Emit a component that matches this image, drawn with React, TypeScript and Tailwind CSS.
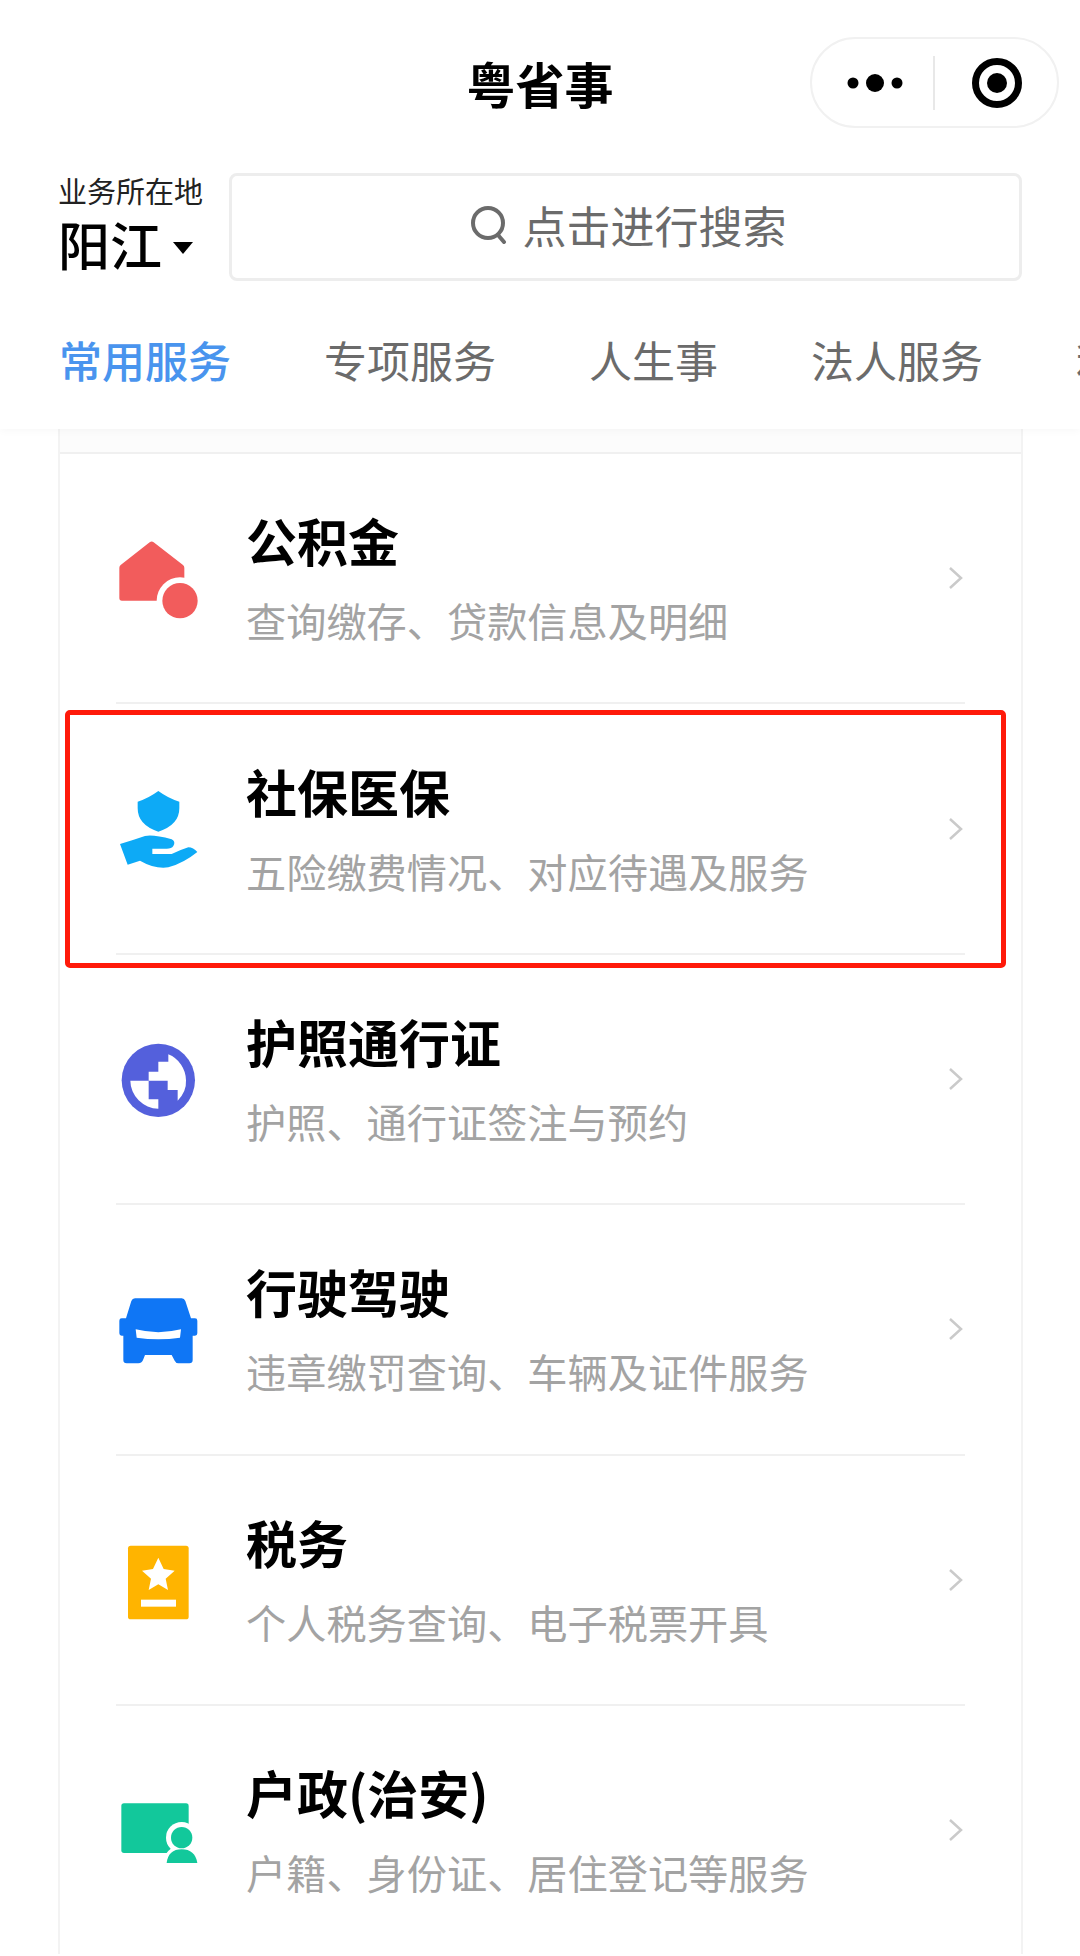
const FONT = '[font-family:"Noto_Sans_CJK_SC","Noto_Sans",sans-serif]';

function HouseIcon() {
  return (
    <svg className="w-[130px] h-[118px] shrink-0" viewBox="0 27 390 354">
      <path d="M179 97 Q185 92 191 97 L279 165 Q283 168 283 173 V272 H96 Q88 272 88 264 V173 Q88 168 92 165 Z" fill="#f25c5c" />
      <circle cx="270" cy="272" r="70" fill="#fff" />
      <circle cx="270" cy="272" r="53" fill="#f25c5c" />
    </svg>
  );
}

function ShieldIcon() {
  return (
    <svg className="w-[130px] h-[118px] shrink-0" viewBox="0 0 390 354" fill="#0daaf6">
      <path d="M205 63 Q235 85 268 95 V115 Q268 165 205 185 Q143 165 143 115 V95 Q175 85 205 63 Z" />
      <path d="M90 222 Q130 210 165 198 Q190 193 245 208 Q258 215 250 228 Q245 236 230 236 H187 V252 H245 Q270 240 295 232 Q310 232 322 246 Q280 280 235 292 Q195 298 150 272 L113 284 Z" />
    </svg>
  );
}

function GlobeIcon() {
  return (
    <svg className="w-[130px] h-[118px] shrink-0" viewBox="0 0 390 354">
      <circle cx="205" cy="181" r="110" fill="#5460dc" />
      <path d="M235 103 V125 H205 V155 H176 V182 H233 V210 H263 V242 Q290 215 288 181 A85 85 0 0 0 235 103 Z" fill="#fff" />
      <path d="M121 182 H176 V238 H205 V266 A85 85 0 0 1 121 182 Z" fill="#fff" />
    </svg>
  );
}

function CarIcon() {
  return (
    <svg className="w-[130px] h-[118px] shrink-0" viewBox="0 0 390 354">
      <path d="M135 85 H275 Q283 85 286 93 L303 145 H315 Q322 145 322 152 V190 Q322 197 315 197 H308 V270 Q308 280 298 280 H265 Q258 280 254 272 L245 255 H165 L160 268 Q156 280 145 280 H110 Q100 280 100 270 V197 H95 Q88 197 88 190 V152 Q88 145 95 145 H108 L124 93 Q127 85 135 85 Z" fill="#0f76f5" />
      <path d="M137 178 Q205 195 273 178 L270 203 Q205 213 140 203 Z" fill="#fff" />
    </svg>
  );
}

function TaxIcon() {
  return (
    <svg className="w-[130px] h-[118px] shrink-0" viewBox="0 0 390 354">
      <rect x="114" y="74" width="182" height="221" rx="8" fill="#ffb400" />
      <path d="M205 110 L221 144 L254 149 L227 173 L234 207 L205 190 L176 207 L183 173 L156 149 L189 144 Z" fill="#fff" />
      <rect x="153" y="236" width="105" height="21" fill="#fff" />
    </svg>
  );
}

function IdIcon() {
  return (
    <svg className="w-[130px] h-[118px] shrink-0" viewBox="0 0 390 354">
      <rect x="94" y="97" width="202" height="149" rx="8" fill="#12c89b" />
      <circle cx="275" cy="200" r="47" fill="#fff" />
      <path d="M214 290 Q222 225 275 225 V290 Z" fill="#fff" />
      <path d="M230 276 Q235 235 275 235 Q315 235 322 276 Z" fill="#12c89b" />
      <circle cx="275" cy="200" r="32" fill="#12c89b" />
    </svg>
  );
}

const rows = [
  { icon: <HouseIcon />, title: '公积金', desc: '查询缴存、贷款信息及明细' },
  { icon: <ShieldIcon />, title: '社保医保', desc: '五险缴费情况、对应待遇及服务' },
  { icon: <GlobeIcon />, title: '护照通行证', desc: '护照、通行证签注与预约' },
  { icon: <CarIcon />, title: '行驶驾驶', desc: '违章缴罚查询、车辆及证件服务' },
  { icon: <TaxIcon />, title: '税务', desc: '个人税务查询、电子税票开具' },
  { icon: <IdIcon />, title: '户政(治安)', desc: '户籍、身份证、居住登记等服务' },
];

const tabs = ['专项服务', '人生事', '法人服务', '利民服务'];

export default function App() {
  return (
    <div className={`relative w-[1080px] h-[1956px] overflow-hidden bg-white ${FONT}`}>
      <header className="relative z-10 h-[429px] bg-white shadow-[0_2px_8px_rgba(0,0,0,0.03)]">
        <div className="grid grid-cols-[1fr_auto_1fr] items-center pt-[37px]">
          <div />
          <h1 className="text-[49px] leading-[91px] font-bold text-black">粤省事</h1>
          <div className="flex justify-end pr-[21px]">
            <div className="flex items-center w-[249px] h-[91px] rounded-full border-2 border-[#f1f1f1] bg-white">
              <svg className="w-[56px] h-[20px] ml-[35px]" viewBox="0 0 56 20" fill="#000">
                <circle cx="6" cy="10" r="5.5" />
                <circle cx="28" cy="10" r="9" />
                <circle cx="50" cy="10" r="5.5" />
              </svg>
              <div className="w-[2px] h-[54px] ml-[30px] bg-[#e8e8e8]" />
              <svg className="w-[50px] h-[50px] ml-[37px]" viewBox="0 0 50 50">
                <circle cx="25" cy="25" r="21.5" fill="none" stroke="#000" strokeWidth="7" />
                <circle cx="25" cy="25" r="10" fill="#000" />
              </svg>
            </div>
          </div>
        </div>

        <div className="flex items-center gap-[26px] pl-[58px] pr-[58px] pt-[45px]">
          <div className="w-[145px] shrink-0 self-start">
            <div className="text-[29px] leading-[34px] text-[#222] whitespace-nowrap">业务所在地</div>
            <div className="flex items-center mt-[9px]">
              <span className="text-[52px] leading-[56px] font-medium text-black">阳江</span>
              <span className="ml-[11px] mt-[8px] w-0 h-0 border-x-[10px] border-x-transparent border-t-[12px] border-t-black" />
            </div>
          </div>
          <div className="flex-1 h-[108px] flex items-center justify-center gap-[16px] pl-[6px] pb-[4px] rounded-[8px] border-[3px] border-[#ededed] bg-white">
            <svg className="w-[36px] h-[38px]" viewBox="0 0 36 38" fill="none" stroke="#6b6b6b" strokeWidth="4" strokeLinecap="round">
              <circle cx="17" cy="17" r="15" />
              <path d="M27 29 L33 36" />
            </svg>
            <span className="text-[44px] leading-none text-[#6b6b6b]">点击进行搜索</span>
          </div>
        </div>

        <nav className="flex gap-[93px] pl-[59px] pt-[48px] overflow-hidden whitespace-nowrap text-[43px] leading-[60px]">
          <div className="relative shrink-0 text-[#4994ee] font-medium">
            常用服务
            <div className="absolute left-[21px] top-[86px] w-[127px] h-[6px] bg-[#4994ee]" />
          </div>
          {tabs.map((t) => (
            <div key={t} className="shrink-0 text-[#6b6b6b]">{t}</div>
          ))}
        </nav>
      </header>

      <main className="ml-[58px] w-[965px] border-x-2 border-[#f3f3f3] bg-white">
        <div className="h-[23px] bg-[#fcfcfc]" />
        <div className="h-[2px] bg-[#f0f0f0]" />
        {rows.map((r, i) => (
          <div key={r.title}>
            <div className="flex items-center h-[248.4px] pl-[30px] pr-[57px]">
              {r.icon}
              <div className="flex-1 ml-[26px] pb-[3px]">
                <div className="text-[51px] leading-[70px] font-bold text-black">{r.title}</div>
                <div className="text-[40.2px] leading-[56px] mt-[17px] text-[#a3a3a3]">{r.desc}</div>
              </div>
              <svg className="w-[16px] h-[24px] shrink-0" viewBox="0 0 16 24" fill="none" stroke="#cacaca" strokeWidth="2.5">
                <path d="M2 2 L13 12 L2 22" />
              </svg>
            </div>
            {i < rows.length - 1 && <div className="h-[2px] mx-[56px] bg-[#f0f0f0]" />}
          </div>
        ))}
      </main>

      <div className="absolute left-[65px] top-[710px] w-[941px] h-[258px] border-[5px] border-[#ff1a0a] rounded-[5px]" />
    </div>
  );
}
